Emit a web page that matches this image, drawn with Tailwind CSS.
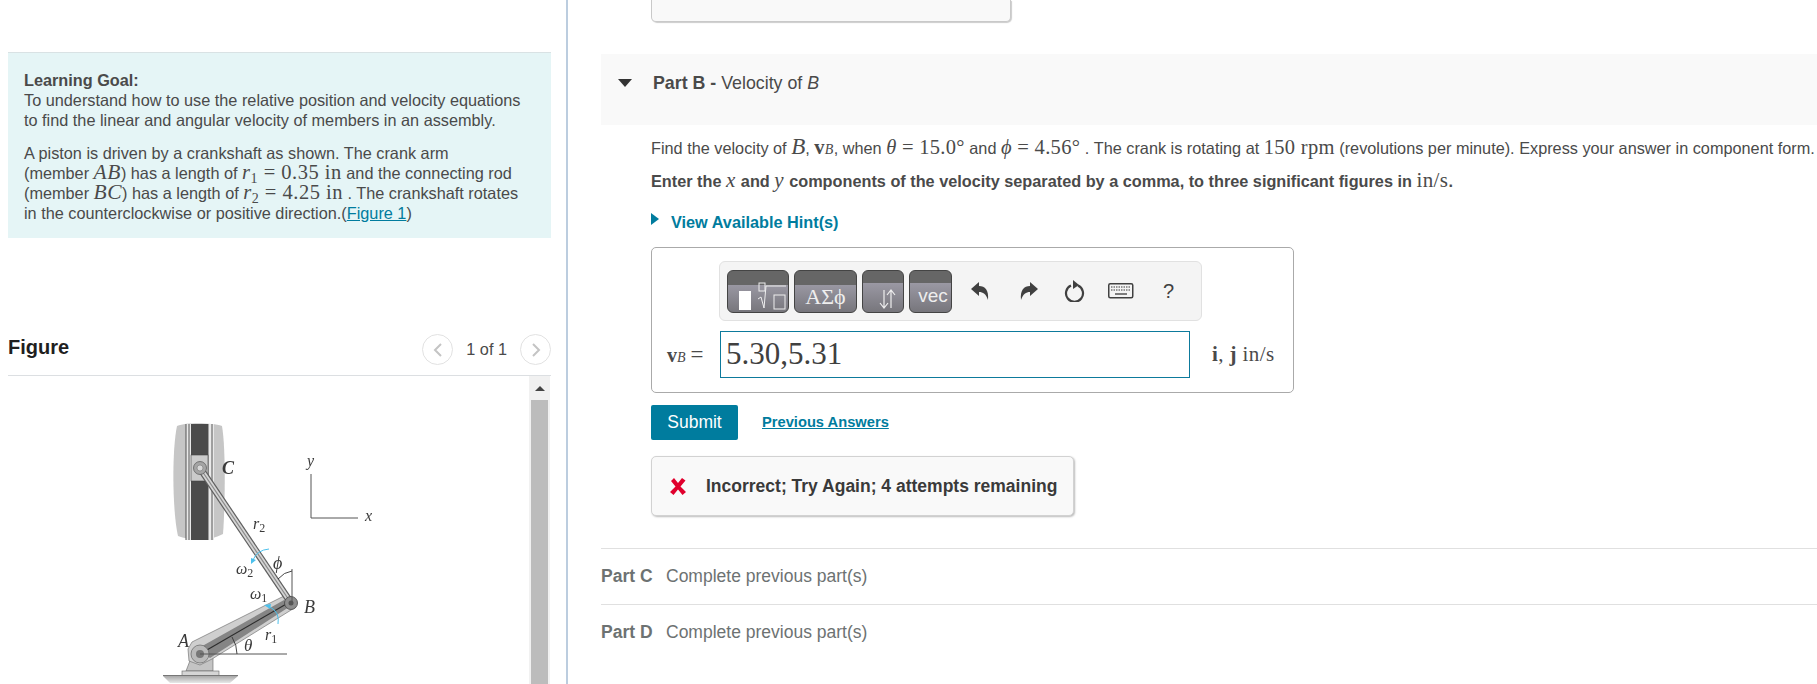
<!DOCTYPE html>
<html lang="en">
<head>
<meta charset="UTF-8">
<title>Part B - Velocity of B</title>
<script src="https://cdn.jsdelivr.net/npm/@tailwindcss/browser@4"></script>
</head>
<body class="h-[684px] overflow-hidden bg-white font-['Liberation_Sans',Arial,sans-serif] text-[16.28px] text-[#4a4a4a]">
<div class="flex h-[684px] overflow-hidden">

  <!-- left column -->
  <div class="w-[568px] shrink-0 border-r-2 border-[#bccddf] pl-2 pr-[15px] pt-[52px]">
    <div class="h-[186px] border-t border-[#d9e2e4] bg-[#e5f5f6] px-4 pt-[17px] leading-5">
      <div class="font-bold">Learning Goal:</div>
      <div>To understand how to use the relative position and velocity equations<br>to find the linear and angular velocity of members in an assembly.</div>
      <div class="mt-[13px]">A piston is driven by a crankshaft as shown. The crank arm<br>(member <i class="font-['Liberation_Serif',serif] text-[21.500px] leading-[0] tracking-[0.5px]">AB</i>) has a length of <span class="font-['Liberation_Serif',serif] text-[20.500px] leading-[0] tracking-[0.5px]"><i>r</i><sub class="text-[14px]">1</sub> = 0.35 in</span> and the connecting rod<br>(member <i class="font-['Liberation_Serif',serif] text-[21.500px] leading-[0] tracking-[0.5px]">BC</i>) has a length of <span class="font-['Liberation_Serif',serif] text-[20.500px] leading-[0] tracking-[0.5px]"><i>r</i><sub class="text-[14px]">2</sub> = 4.25 in</span> . The crankshaft rotates<br>in the counterclockwise or positive direction.(<a class="text-[#007c9e] underline">Figure 1</a>)</div>
    </div>

    <div class="mt-[97px] flex h-[41px] items-start justify-between border-b border-[#dcdfe2]">
      <div class="text-[20px] font-bold leading-6 text-[#1f1f1f]">Figure</div>
      <div class="-mt-[1px] flex items-center">
        <button class="flex size-[31px] items-center justify-center rounded-full border border-[#e2e2e2] text-[#c4c4c4]">
          <svg class="h-[14px] w-[10px]" viewBox="0 0 10 14" fill="none" stroke="currentColor" stroke-width="2"><path d="M8 1 2 7l6 6"/></svg>
        </button>
        <span class="mx-[13px]">1 of 1</span>
        <button class="flex size-[31px] items-center justify-center rounded-full border border-[#e2e2e2] text-[#c4c4c4]">
          <svg class="h-[14px] w-[10px]" viewBox="0 0 10 14" fill="none" stroke="currentColor" stroke-width="2"><path d="M2 1l6 6-6 6"/></svg>
        </button>
      </div>
    </div>

    <div class="flex h-[308px]">
      <div class="w-[521px] shrink-0">
        <svg class="ml-[142px] mt-[33px] blur-[0.4px]" width="250" height="274" viewBox="0 0 250 274">
          <defs>
            <linearGradient id="ground" x1="0" y1="0" x2="0" y2="1"><stop offset="0" stop-color="#a8a8a8"/><stop offset="1" stop-color="#e8e8e8"/></linearGradient>
          </defs>
          <!-- wall and slot -->
          <path d="M27 17 C38 13 62 14 72 17 C76 40 75 100 73 125 C60 132 40 132 28 127 C22 100 22 40 27 17Z" fill="#c6c6c6"/>
          <rect x="36" y="15" width="28" height="116" fill="#e9e9e9"/>
          <path d="M36 15v116M39 15v116M58 15v116M62 15v116" stroke="#555" stroke-width="1"/>
          <rect x="41" y="15" width="17" height="116" fill="#4b4b4b"/>
          <rect x="41" y="46" width="17" height="26" fill="#cbcbcb" stroke="#444" stroke-width=".6"/>
          <!-- base -->
          <path d="M41 249 46 238H56L63 249V262H36Z" fill="#c4c4c4" stroke="#666" stroke-width=".6"/>
          <rect x="32" y="262" width="37" height="5" fill="#d5d5d5" stroke="#666" stroke-width=".6"/>
          <path d="M13 267H88L80 274H20Z" fill="url(#ground)"/>
          <path d="M13 266.500H88" stroke="#777"/>
          <!-- crank AB -->
          <path d="M42 233 134 187 146 198 62 250 50 256 39 252 38 240Z" fill="#cfcfcf" stroke="#777" stroke-width=".7"/>
          <path d="M47 240 134 191 139 198 60 249Z" fill="#858585"/>
          <path d="M50 245 138 194" stroke="#2d2d2d" stroke-width="1.200"/>
          <circle cx="50" cy="245" r="9" fill="#bababa" stroke="#666" stroke-width=".7"/>
          <circle cx="50" cy="245" r="4" fill="#777"/>
          <!-- rod BC -->
          <path d="M50 59 141 194" stroke="#5f5f5f" stroke-width="7"/>
          <path d="M50 59 141 194" stroke="#d5d5d5" stroke-width="4.600"/>
          <path d="M50 59 141 194" stroke="#8a8a8a" stroke-width="1.200"/>
          <circle cx="50" cy="59" r="6.500" fill="#a5a5a5" stroke="#555" stroke-width=".7"/>
          <circle cx="50" cy="59" r="3" fill="#d8d8d8" stroke="#777" stroke-width=".6"/>
          <circle cx="141" cy="194" r="6.500" fill="#8d8d8d" stroke="#444" stroke-width=".8"/>
          <circle cx="141" cy="194" r="2.500" fill="#555"/>
          <!-- reference lines and axes -->
          <path d="M50 245H137M142 160V194M161 65V109H208" fill="none" stroke="#555" stroke-width="1"/>
          <path d="M128 170Q134 163 142 162M87 245Q87 236 82 228" fill="none" stroke="#333" stroke-width=".9"/>
          <!-- angular velocity arrows -->
          <path d="M119 140Q107 141 103 151" fill="none" stroke="#4cc0ec" stroke-width="1"/>
          <path d="M101 155 101 149 106 151Z" fill="#4cc0ec"/>
          <path d="M128 215Q130 203 120 198" fill="none" stroke="#4cc0ec" stroke-width="1"/>
          <path d="M114 196 121 195 120 200Z" fill="#4cc0ec"/>
          <!-- labels -->
          <g font-family="Liberation Serif" font-style="italic" fill="#3a3a3a" font-size="16">
            <text x="157" y="57">y</text>
            <text x="215" y="112">x</text>
            <text x="72" y="65" font-size="18" font-weight="bold">C</text>
            <text x="103" y="120">r<tspan font-size="12" font-style="normal" dy="3">2</tspan></text>
            <text x="86" y="165">ω<tspan font-size="12" font-style="normal" dy="3">2</tspan></text>
            <text x="123" y="160" font-size="18">ϕ</text>
            <text x="100" y="190">ω<tspan font-size="12" font-style="normal" dy="3">1</tspan></text>
            <text x="154" y="204" font-size="18">B</text>
            <text x="115" y="231">r<tspan font-size="12" font-style="normal" dy="3">1</tspan></text>
            <text x="28" y="238" font-size="18">A</text>
            <text x="94" y="242" font-size="17">θ</text>
          </g>
        </svg>
      </div>
      <div class="w-[21px] shrink-0 bg-[#f1f1f1] px-[2px]">
        <div class="flex h-6 items-center justify-center">
          <div class="border-x-[5px] border-b-[5px] border-x-transparent border-b-[#444]"></div>
        </div>
        <div class="h-[284px] bg-[#bcbcbc]"></div>
      </div>
    </div>
  </div>

  <!-- right column -->
  <div class="min-w-0 flex-1 pl-[33px]">
    <div class="ml-[50px] h-[22px] w-[360px] rounded-b-[5px] border-x border-b border-[#c9c9c9] bg-[#f9f9f9] shadow-[1px_1px_1px_#ccc]"></div>

    <div class="mt-8 flex h-[71px] bg-[#f9f9f9] pt-[19px]">
      <div class="ml-[17px] mt-[6px] h-0 border-x-[7px] border-t-[8px] border-x-transparent border-t-[#333]"></div>
      <div class="ml-[21px] text-[17.800px] leading-5"><b>Part B</b> <b>-</b> Velocity of <i>B</i></div>
    </div>

    <div class="ml-[50px]">
      <div class="mt-[13px] whitespace-nowrap leading-5">Find the velocity of <i class="font-['Liberation_Serif',serif] text-[23px] leading-[0]">B</i>, <span class="font-['Liberation_Serif',serif] text-[20.500px] leading-[0] tracking-[0.3px]"><b>v</b><i class="text-[14px]">B</i></span>, when <span class="font-['Liberation_Serif',serif] text-[20.500px] leading-[0] tracking-[0.3px]"><i>θ</i> = 15.0°</span> and <span class="font-['Liberation_Serif',serif] text-[20.500px] leading-[0] tracking-[0.3px]"><i>ϕ</i> = 4.56°</span> . The crank is rotating at <span class="font-['Liberation_Serif',serif] text-[20.500px] leading-[0] tracking-[0.3px]">150 rpm</span> (revolutions per minute). Express your answer in component form.</div>
      <div class="mt-[13px] whitespace-nowrap font-bold leading-5">Enter the <i class="font-['Liberation_Serif',serif] text-[21px] font-normal leading-[0] tracking-[1px]">x</i> and <i class="font-['Liberation_Serif',serif] text-[21px] font-normal leading-[0] tracking-[1px]">y</i> components of the velocity separated by a comma, to three significant figures in <span class="font-['Liberation_Serif',serif] text-[21px] font-normal leading-[0] tracking-[0.4px]">in/s</span>.</div>

      <div class="mt-[21px] flex h-5 items-start font-bold leading-5 text-[#007c9e]">
        <div class="mt-[1px] h-0 border-y-[6px] border-l-[8px] border-y-transparent border-l-[#007c9e]"></div>
        <span class="ml-3">View Available Hint(s)</span>
      </div>

      <!-- answer box -->
      <div class="mt-[15px] h-[146px] w-[643px] rounded-[5px] border border-[#aaaaaa] pt-[13px]">
        <div class="ml-[67px] flex h-[60px] w-[483px] items-center rounded-[6px] border border-[#e1e1e1] bg-[#f4f4f4] pl-[7px]">
          <div class="flex gap-[5px]">
            <div class="relative h-[43px] w-[62px] rounded-[6px] border border-[#444] bg-[linear-gradient(#666_0,#666_33%,#9a98a3_33%,#77767c_100%)]">
              <svg class="absolute left-0 top-0" width="62" height="43" viewBox="0 0 62 43">
                <rect x="11" y="20" width="12" height="19" fill="#fff"/>
                <rect x="31" y="12" width="6" height="8" fill="none" stroke="#eee" stroke-width="1"/>
                <path d="M30 28 33 26 36 37 38 15H58" fill="none" stroke="#eee" stroke-width="1"/>
                <rect x="46" y="24" width="11" height="14" fill="none" stroke="#eee" stroke-width="1"/>
              </svg>
            </div>
            <div class="flex h-[43px] w-[63px] items-end justify-center rounded-[6px] border border-[#444] bg-[linear-gradient(#666_0,#666_33%,#9a98a3_33%,#77767c_100%)] pb-[2px] font-['Liberation_Serif',serif] text-[22px] leading-[26px] text-[#eee]">ΑΣϕ</div>
            <div class="relative h-[43px] w-[42px] rounded-[6px] border border-[#444] bg-[linear-gradient(#666_0,#666_30%,#9a98a3_30%,#77767c_100%)]">
              <svg class="absolute left-0 top-0" width="42" height="43" viewBox="0 0 42 43" fill="none" stroke="#eee" stroke-width="1.200">
                <path d="M21 19V36M17 32l4 5 4-5M28 37V20M24 24l4-5 4 5"/>
              </svg>
            </div>
            <div class="flex h-[43px] w-[43px] items-end justify-center rounded-[6px] border border-[#444] bg-[linear-gradient(#666_0,#666_30%,#9a98a3_30%,#77767c_100%)] pb-[5px] pl-[5px] text-[19px] leading-[22px] text-[#eee]">vec</div>
          </div>
          <svg class="ml-[19px]" width="18" height="18" viewBox="0 0 18 18" fill="#404040"><path d="M0 7 8 0V4C14 4 18 8 17 18 15 12 12 10 8 10V14Z"/></svg>
          <svg class="ml-[31px]" width="18" height="18" viewBox="0 0 18 18" fill="#404040"><path d="M18 7 10 0V4C4 4 0 8 1 18 3 12 6 10 10 10V14Z"/></svg>
          <svg class="ml-[26px]" width="21" height="22" viewBox="0 0 21 22" fill="none"><path d="M7 5.500A8.500 8.500 0 1 0 14 5.500" stroke="#404040" stroke-width="2.200"/><path d="M9 0 15 5 9 9Z" fill="#404040"/></svg>
          <svg class="ml-[23px]" width="26" height="16" viewBox="0 0 26 16" fill="none"><rect x=".75" y=".75" width="24" height="14" rx="1.500" stroke="#404040" stroke-width="1.500"/><path d="M3 4H23M3 7H23" stroke="#777" stroke-width="1.500" stroke-dasharray="1.500 1"/><path d="M7 11H19" stroke="#555" stroke-width="1.500"/></svg>
          <span class="ml-[29px] text-[20px] text-[#404040]">?</span>
        </div>
        <div class="mt-[10px] flex items-center">
          <div class="ml-[15px] flex w-[53px] items-center gap-[5px] whitespace-nowrap font-['Liberation_Serif',serif] text-[20px] leading-none"><span><b>v</b><i class="text-[14px]">B</i></span><span class="text-[23px]">=</span></div>
          <div class="flex h-[47px] w-[470px] items-center border border-[#0d7a9c] pb-[2px] pl-[5px] font-['Liberation_Serif',serif] text-[31px] leading-none text-[#404040]">5.30,5.31</div>
          <div class="ml-[22px] whitespace-nowrap font-['Liberation_Serif',serif] text-[21px] leading-none tracking-[0.4px]"><b>i</b>, <b>j</b> in/s</div>
        </div>
      </div>

      <div class="mt-3 flex items-center">
        <button class="h-[35px] w-[87px] rounded-[2px] bg-[#007c9e] text-[17.500px] text-white">Submit</button>
        <a class="ml-6 text-[14.700px] font-bold text-[#007c9e] underline">Previous Answers</a>
      </div>

      <div class="mt-4 flex h-[60px] w-[423px] items-center rounded-[5px] border border-[#d2d2d2] bg-[#f9f9f9] shadow-[1px_1px_2px_#bbb]">
        <svg class="ml-[17px]" width="18" height="17" viewBox="0 0 18 17"><path d="M2 3 5 0 9 5 13 0 16.500 2.500 11.500 8.500 17 14 13.500 17 9 11.500 4.500 17 1 14 6.500 8.500Z" fill="#e0002d"/></svg>
        <span class="ml-[19px] text-[17.500px] font-bold text-[#3a3a3a]">Incorrect; Try Again; 4 attempts remaining</span>
      </div>
    </div>

    <div class="mt-8 flex h-14 items-center border-t border-[#e0e0e0] text-[17.500px] text-[#6d7272]"><b class="w-[65px]">Part C</b><span>Complete previous part(s)</span></div>
    <div class="flex h-14 items-center border-t border-[#e0e0e0] text-[17.500px] text-[#6d7272]"><b class="w-[65px]">Part D</b><span>Complete previous part(s)</span></div>
  </div>
</div>
</body>
</html>
